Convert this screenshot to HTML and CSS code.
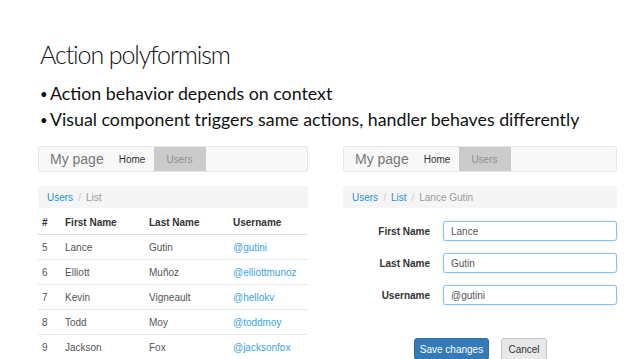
FILE: index.html
```html
<!DOCTYPE html>
<html lang="en">
<head>
    <meta charset="UTF-8">
    <title>Action polyformism</title>
    <link rel="stylesheet" href="styles.css">
</head>
<body>
    <div class="slide">
        <h1 class="title">Action polyformism</h1>
        <ul class="points">
            <li>Action behavior depends on context</li>
            <li>Visual component triggers same actions, handler behaves differently</li>
        </ul>

        <div class="demos">
            <!-- List screen -->
            <section class="demo demo-list">
                <nav class="navbar">
                    <span class="brand">My page</span>
                    <a class="nav-link">Home</a>
                    <a class="nav-link active">Users</a>
                </nav>
                <div class="crumb">
                    <a class="crumb-link">Users</a><span class="sep">/</span><span class="crumb-current">List</span>
                </div>
                <table class="users">
                    <thead>
                        <tr><th class="col-id">#</th><th class="col-first">First Name</th><th class="col-last">Last Name</th><th>Username</th></tr>
                    </thead>
                    <tbody>
                        <tr><td>5</td><td>Lance</td><td>Gutin</td><td><a>@gutini</a></td></tr>
                        <tr><td>6</td><td>Elliott</td><td>Muñoz</td><td><a>@elliottmunoz</a></td></tr>
                        <tr><td>7</td><td>Kevin</td><td>Vigneault</td><td><a>@hellokv</a></td></tr>
                        <tr><td>8</td><td>Todd</td><td>Moy</td><td><a>@toddmoy</a></td></tr>
                        <tr><td>9</td><td>Jackson</td><td>Fox</td><td><a>@jacksonfox</a></td></tr>
                    </tbody>
                </table>
            </section>

            <!-- Edit screen -->
            <section class="demo demo-edit">
                <nav class="navbar">
                    <span class="brand">My page</span>
                    <a class="nav-link">Home</a>
                    <a class="nav-link active">Users</a>
                </nav>
                <div class="crumb">
                    <a class="crumb-link">Users</a><span class="sep">/</span><a class="crumb-link">List</a><span class="sep">/</span><span class="crumb-current">Lance Gutin</span>
                </div>
                <form class="edit-form">
                    <div class="form-row">
                        <label for="first-name">First Name</label>
                        <input type="text" id="first-name" value="Lance">
                    </div>
                    <div class="form-row">
                        <label for="last-name">Last Name</label>
                        <input type="text" id="last-name" value="Gutin">
                    </div>
                    <div class="form-row">
                        <label for="username">Username</label>
                        <input type="text" id="username" value="@gutini">
                    </div>
                    <div class="form-actions">
                        <button type="button" class="btn btn-primary">Save changes</button>
                        <button type="button" class="btn btn-default">Cancel</button>
                    </div>
                </form>
            </section>
        </div>
    </div>
</body>
</html>
```

FILE: styles.css
```css
html, body {
    margin: 0;
    padding: 0;
    background: #fff;
}

.slide {
    width: 638px;
    height: 359px;
    overflow: hidden;
    padding-left: 38px;
    box-sizing: border-box;
    font-family: Lato, "Open Sans", sans-serif;
    color: #111;
}

.title {
    margin: 36px 0 0 2px;
    font-weight: 300;
    font-size: 25px;
    letter-spacing: -1.1px;
    line-height: 36px;
    color: #111;
}

.points {
    list-style: none;
    margin: 8px 0 0 2px;
    padding: 0;
    font-size: 17.8px;
    line-height: 26px;
}

.points li {
    height: 26px;
}

.points li::before {
    content: "\2022";
    display: inline-block;
    width: 10px;
    font-size: 13px;
    line-height: 1;
    vertical-align: 1px;
}

.demos {
    display: flex;
    gap: 35px;
    margin-top: 14px;
    font-family: "Liberation Sans", Arial, sans-serif;
    font-size: 10px;
    color: #333;
}

.demo-list {
    width: 270px;
}

.demo-edit {
    width: 274px;
}

.navbar {
    display: flex;
    align-items: stretch;
    height: 26px;
    box-sizing: border-box;
    background: #f8f8f8;
    border: 1px solid #e7e7e7;
    border-radius: 3px;
}

.brand {
    display: flex;
    align-items: center;
    padding: 0 4px 0 11px;
    font-size: 14px;
    color: #777;
}

.nav-link {
    display: flex;
    align-items: center;
    padding: 0 9px 0 11px;
    color: #333;
}

.nav-link.active {
    background: #cbcbcb;
    color: #8f8f8f;
    padding: 0 13px 0 12px;
}

.crumb {
    display: flex;
    align-items: center;
    height: 22px;
    margin-top: 14px;
    padding-left: 9px;
    background: #f5f5f5;
    border-radius: 3px;
    color: #999;
}

.crumb-link {
    color: #2a8fd0;
}

.sep {
    color: #ccc;
    padding: 0 5px;
}

.users {
    width: 100%;
    border-collapse: collapse;
    margin-top: 2px;
}

.users th,
.users td {
    text-align: left;
    padding: 0 4px;
    height: 24px;
}

.users th {
    font-weight: bold;
    border-bottom: 1px solid #ddd;
}

.users td {
    border-top: 1px solid #e8e8e8;
    color: #555;
}

.users tbody tr:first-child td {
    border-top: none;
}

.users td a {
    color: #3ba4e6;
}

.col-id { width: 15px; }
.col-first { width: 76px; }
.col-last { width: 76px; }

.edit-form {
    margin-top: 13px;
}

.form-row {
    display: flex;
    align-items: center;
    margin-bottom: 12px;
}

.form-row label {
    width: 87px;
    text-align: right;
    font-weight: bold;
    color: #333;
}

.form-row input {
    margin-left: 13px;
    width: 174px;
    height: 20px;
    box-sizing: border-box;
    padding: 0 7px;
    border: 1px solid #8ec3ee;
    border-radius: 3px;
    box-shadow: 0 0 2px rgba(102, 175, 233, 0.5);
    font-family: "Liberation Sans", Arial, sans-serif;
    font-size: 10px;
    color: #555;
}

.form-actions {
    display: flex;
    gap: 12px;
    margin: 33px 0 0 71px;
}

.btn {
    height: 22px;
    padding: 0;
    white-space: nowrap;
    border-radius: 3px;
    font-family: "Liberation Sans", Arial, sans-serif;
    font-size: 10px;
}

.btn-primary {
    width: 75px;
    background: #337ab7;
    border: 1px solid #2e6da4;
    color: #fff;
}

.btn-default {
    width: 46px;
    background: #e8e8e8;
    border: 1px solid #c4c4c4;
    color: #333;
}
```
